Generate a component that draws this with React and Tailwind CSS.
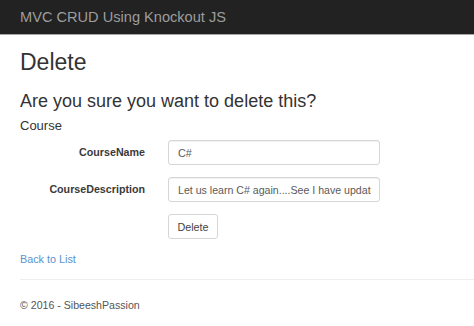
import React from 'react';

const font = { fontFamily: '"Liberation Sans", Arial, sans-serif' };

function Row({ label, children }) {
  return (
    <div className="flex items-center h-[25px]">
      <div className="w-[125px] text-right text-[10.7px] font-bold text-[#3a3a3a] leading-none">{label}</div>
      <div className="ml-[23px]">{children}</div>
    </div>
  );
}

export default function App() {
  return (
    <div className="w-[474px] h-[326px] bg-white overflow-hidden font-['Liberation_Sans',Arial,sans-serif]">
      <nav className="h-[35px] bg-[#222] border-b border-[#a8a8a8] flex items-center pl-[20px]">
        <span className="text-[14.6px] text-[#9d9d9d] leading-none">MVC CRUD Using Knockout JS</span>
      </nav>

      <div className="pl-[20px]">
        <h2 className="mt-[15px] text-[23px] leading-[24px] text-[#333]">Delete</h2>
        <h3 className="mt-[18px] text-[18px] leading-[18px] text-[#333]">Are you sure you want to delete this?</h3>
        <h4 className="mt-[9px] text-[13px] leading-[13px] text-[#333]">Course</h4>

        <div className="mt-[8px] flex flex-col gap-[12px]">
          <Row label="CourseName">
            <input
              readOnly
              value="C#"
              className="w-[212px] h-[25px] px-[9px] border border-[#d6d6d6] rounded-[3px] text-[10.8px] text-[#5a5a5a] shadow-[inset_0_1px_1px_rgba(0,0,0,0.06)] outline-none"
              style={font}
            />
          </Row>
          <Row label="CourseDescription">
            <input
              readOnly
              value="Let us learn C# again....See I have updated"
              className="w-[212px] h-[25px] pl-[9px] pr-[8px] border border-[#d6d6d6] rounded-[3px] text-[10.6px] text-[#5a5a5a] shadow-[inset_0_1px_1px_rgba(0,0,0,0.06)] outline-none"
              style={font}
            />
          </Row>
          <Row label="">
            <button className="w-[50px] h-[25px] border border-[#d6d6d6] rounded-[3px] bg-white text-[10.8px] text-[#444]">
              Delete
            </button>
          </Row>
        </div>

        <div className="mt-[15px] text-[10.8px] leading-[11px]">
          <a href="#" className="text-[#5a92cc]">Back to List</a>
        </div>

        <hr className="mt-[14px] border-t border-[#eee]" />

        <footer className="mt-[20px] text-[10.6px] leading-[11px] text-[#555]">© 2016 - SibeeshPassion</footer>
      </div>
    </div>
  );
}
